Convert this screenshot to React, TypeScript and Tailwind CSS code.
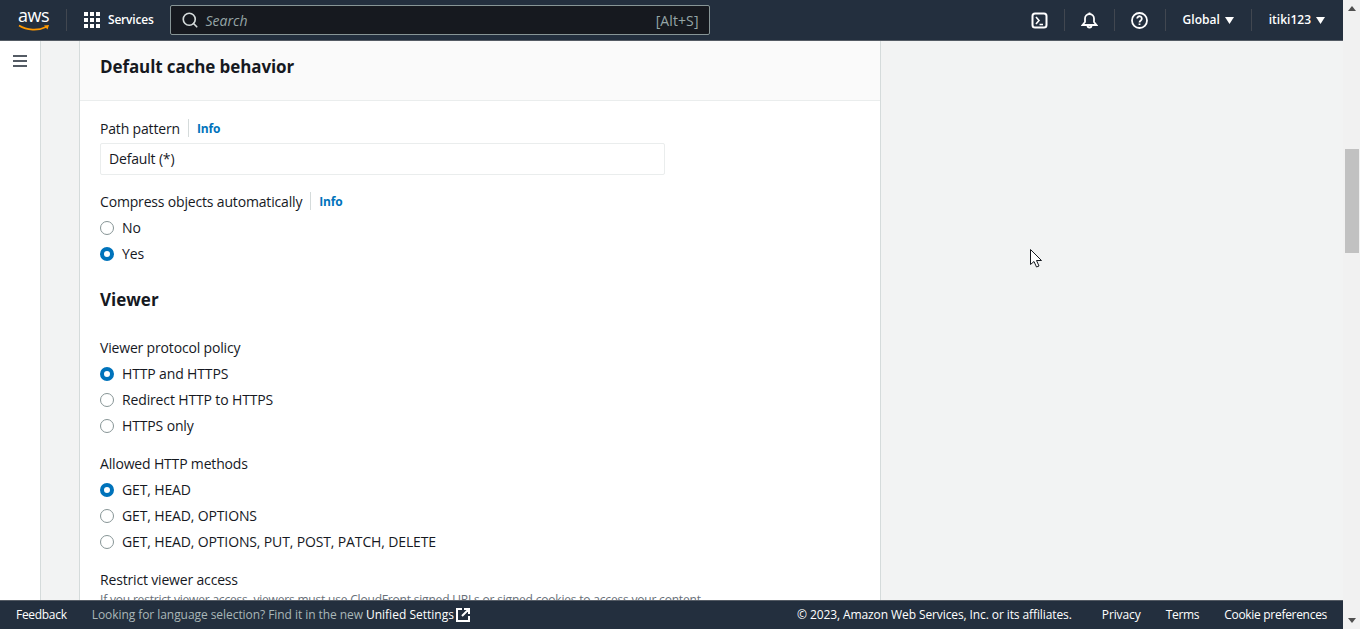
import { Search } from 'lucide-react';

const font = "font-['Open_Sans','Noto_Sans',sans-serif]";

function Radio({ label, checked }: { label: string; checked?: boolean }) {
  return (
    <div className="flex items-center h-[26px]">
      {checked ? (
        <span className="w-[14px] h-[14px] rounded-full border-[4px] border-[#0073bb] bg-white" />
      ) : (
        <span className="w-[14px] h-[14px] rounded-full border-[1.5px] border-[#879596] bg-white" />
      )}
      <span className="ml-2 pb-[2px] text-[14px] tracking-[-0.14px] text-[#16191f]">{label}</span>
    </div>
  );
}

function Label({ text, info }: { text: string; info?: boolean }) {
  return (
    <div className="flex items-center h-[20px]">
      <span className="text-[14px] tracking-[-0.17px] text-[#16191f]">{text}</span>
      {info && (
        <>
          <span className="w-px h-[18px] bg-[#d5dbdb] ml-2 mr-[8px]" />
          <span className="mt-[2px] text-[12px] tracking-[-0.15px] font-bold text-[#0073bb]">Info</span>
        </>
      )}
    </div>
  );
}

function TopBar() {
  return (
    <header className="h-[41px] shrink-0 bg-[#232f3e] border-b border-[#545b64] flex items-center text-white">
      <div className="w-[66px] h-full relative shrink-0">
        <span className="absolute left-[18px] top-[4px] text-[18px] leading-[22px] tracking-[-0.5px]">aws</span>
        <svg className="absolute left-[18px] top-[24px]" width="32" height="8" viewBox="0 0 32 8">
          <path d="M1 1.5C9 6.5 20 7 28 3" fill="none" stroke="#ff9900" strokeWidth="1.6" />
          <path d="M26 1.5l5-.5-1.5 4.5z" fill="#ff9900" />
        </svg>
      </div>
      <span className="w-px h-[22px] bg-[#414750]" />
      <div className="ml-[17px] grid grid-cols-3 gap-[2px] w-[16px]">
        {[...Array(9)].map((_, i) => (
          <span key={i} className="w-[4px] h-[4px] bg-white" />
        ))}
      </div>
      <span className="ml-[8px] text-[12px] tracking-[-0.2px] font-semibold">Services</span>
      <div className="ml-[16px] w-[540px] h-[30px] bg-[#16191f] border border-[#879596] rounded-[2px] flex items-center pl-[10px] pr-[10px]">
        <Search className="w-[18px] h-[18px] text-[#d5dbdb]" strokeWidth={2.2} />
        <span className="ml-[7px] text-[14px] italic text-[#95a5a6]">Search</span>
        <span className="ml-auto text-[14px] tracking-[0.1px] text-[#95a5a6]">[Alt+S]</span>
      </div>
      <div className="ml-auto flex items-center h-full pr-[18px]">
        <svg width="17" height="17" viewBox="0 0 17 17" fill="none" stroke="white" strokeWidth="2">
          <rect x="1.5" y="1.5" width="14" height="14" rx="2.5" />
          <path d="M5 5l3 3.5-3 3.5M8.5 12.5h3.5" strokeWidth="1.6" />
        </svg>
        <span className="w-px h-[22px] bg-[#414750] ml-[16px]" />
        <svg className="ml-[16px]" width="17" height="17" viewBox="0 0 17 17" fill="none" stroke="white" strokeWidth="1.8">
          <path d="M1.5 13h14L13 10V6.5a4.5 4.5 0 0 0-9 0V10z" />
          <path d="M8.5 .5V2M6.5 13.5a2 2 0 0 0 4 0" />
        </svg>
        <span className="w-px h-[22px] bg-[#414750] ml-[16px]" />
        <svg className="ml-[16px]" width="17" height="17" viewBox="0 0 17 17" fill="none" stroke="white" strokeWidth="1.8">
          <circle cx="8.5" cy="8.5" r="7.5" />
          <path d="M6.2 6.6a2.3 2.3 0 1 1 3.6 1.9C9 9.1 8.5 9.5 8.5 10.5M8.5 11.5v1.6" />
        </svg>
        <span className="w-px h-[22px] bg-[#414750] ml-[17px]" />
        <span className="ml-[17px] text-[12px] font-semibold">Global</span>
        <svg className="ml-[5px]" width="9" height="7" viewBox="0 0 9 7"><path d="M0 0h9L4.5 7z" fill="white" /></svg>
        <span className="w-px h-[22px] bg-[#414750] ml-[17px]" />
        <span className="ml-[17px] text-[12px] font-semibold">itiki123</span>
        <svg className="ml-[5px]" width="9" height="7" viewBox="0 0 9 7"><path d="M0 0h9L4.5 7z" fill="white" /></svg>
      </div>
    </header>
  );
}

function Footer() {
  return (
    <footer className="h-[29px] shrink-0 bg-[#232f3e] border-t border-[#545b64] flex items-center text-[12px] tracking-[-0.1px] pl-[16px] pr-[16px]">
      <span className="text-white font-medium tracking-[-0.3px]">Feedback</span>
      <span className="ml-[25px] text-[#aab7b8] tracking-[-0.06px]">Looking for language selection? Find it in the new</span>
      <span className="ml-[3px] text-white font-medium tracking-[0px]">Unified Settings</span>
      <svg className="ml-[2px]" width="14" height="14" viewBox="0 0 14 14" fill="none" stroke="white" strokeWidth="2">
        <path d="M6 1H1v12h12V8M8 1h5v5M13 1L6 8" />
      </svg>
      <span className="ml-auto text-white">© 2023, Amazon Web Services, Inc. or its affiliates.</span>
      <span className="ml-[30px] text-white">Privacy</span>
      <span className="ml-[25px] text-white tracking-[-0.3px]">Terms</span>
      <span className="ml-[25px] text-white tracking-[-0.3px]">Cookie preferences</span>
    </footer>
  );
}

function Scrollbar() {
  return (
    <div className="w-[17px] shrink-0 h-full bg-[#f1f1f1] flex flex-col items-center">
      <svg className="mt-[6px]" width="8" height="5" viewBox="0 0 8 5"><path d="M0 5h8L4 0z" fill="#505050" /></svg>
      <div className="mt-[138px] w-[14px] h-[104px] bg-[#c1c1c1]" />
      <svg className="mt-auto mb-[6px]" width="8" height="5" viewBox="0 0 8 5"><path d="M0 0h8L4 5z" fill="#505050" /></svg>
    </div>
  );
}

export default function App() {
  return (
    <div className={`h-[629px] w-[1360px] flex overflow-hidden relative ${font}`}>
      <div className="flex-1 flex flex-col min-w-0">
        <TopBar />
        <div className="flex-1 flex min-h-0 overflow-hidden bg-[#f2f3f3]">
          {/* Side nav */}
          <div className="w-[41px] shrink-0 bg-white border-r border-[#d5dbdb] pt-[14px] pl-[13px]">
            <svg width="14" height="12" viewBox="0 0 14 12" stroke="#545b64" strokeWidth="2">
              <path d="M0 1h14M0 6h14M0 11h14" />
            </svg>
          </div>

          {/* Card */}
          <div className="ml-[38px] w-[802px] shrink-0 bg-white border-x border-[#d5dbdb]">
            <div className="h-[60px] bg-[#fafafa] border-b border-[#eaeded] pl-[20px] pb-[8px] flex items-center">
              <h2 className="text-[17px] tracking-[-0.1px] font-bold text-[#16191f]">Default cache behavior</h2>
            </div>
            <div className="pl-[20px] pt-[17px]">
              <Label text="Path pattern" info />
              <div className="mt-[5px] w-[565px] h-[32px] border border-[#eaeded] rounded-[2px] flex items-center pl-[8px] pb-[2px] text-[14px] tracking-[-0.17px] text-[#16191f]">
                Default (*)
              </div>
              <div className="mt-[16px]"><Label text="Compress objects automatically" info /></div>
              <div className="mt-[4px]">
                <Radio label="No" />
                <Radio label="Yes" checked />
              </div>
              <h3 className="mt-[22px] text-[17px] leading-[22px] font-bold text-[#16191f]">Viewer</h3>
              <div className="mt-[26px]"><Label text="Viewer protocol policy" /></div>
              <div className="mt-[4px]">
                <Radio label="HTTP and HTTPS" checked />
                <Radio label="Redirect HTTP to HTTPS" />
                <Radio label="HTTPS only" />
              </div>
              <div className="mt-[14px]"><Label text="Allowed HTTP methods" /></div>
              <div className="mt-[4px]">
                <Radio label="GET, HEAD" checked />
                <Radio label="GET, HEAD, OPTIONS" />
                <Radio label="GET, HEAD, OPTIONS, PUT, POST, PATCH, DELETE" />
              </div>
              <div className="mt-[14px]"><Label text="Restrict viewer access" /></div>
              <p className="mt-[3px] text-[12px] tracking-[-0.19px] leading-[16px] text-[#687078] whitespace-nowrap">
                If you restrict viewer access, viewers must use CloudFront signed URLs or signed cookies to access your content.
              </p>
            </div>
          </div>
        </div>
        <Footer />
      </div>
      <Scrollbar />

      {/* Mouse pointer in the screenshot */}
      <svg className="absolute left-[1030px] top-[249px]" width="13" height="19" viewBox="0 0 13 19">
        <path d="M.5.5v15l3.5-3 2.5 5.5 2.5-1-2.5-5.5h5z" fill="white" stroke="#16191f" />
      </svg>
    </div>
  );
}
